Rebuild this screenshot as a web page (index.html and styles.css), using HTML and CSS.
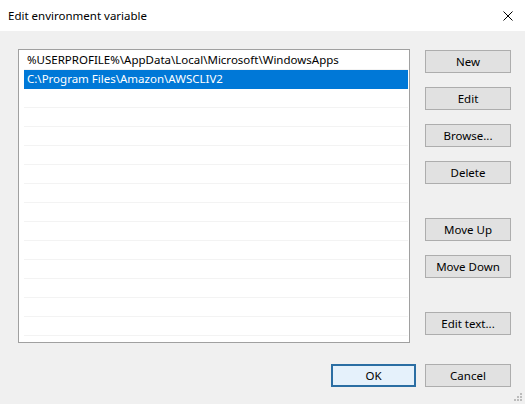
FILE: index.html
```html
<!DOCTYPE html>
<html lang="en">
<head>
    <meta charset="UTF-8">
    <title>Edit environment variable</title>
    <link rel="stylesheet" href="styles.css">
</head>
<body>
    <div class="dialog">
        <div class="titlebar">
            <div class="title">Edit environment variable</div>
            <div class="close">
                <svg width="10" height="10" viewBox="0 0 10 10">
                    <path d="M0.5 0.5 L9.5 9.5 M9.5 0.5 L0.5 9.5" stroke="#000" stroke-width="1" fill="none"/>
                </svg>
            </div>
        </div>

        <div class="content">
            <div class="main">
                <div class="list">
                    <div class="row">%USERPROFILE%\AppData\Local\Microsoft\WindowsApps</div>
                    <div class="row selected">C:\Program Files\Amazon\AWSCLIV2</div>
                    <div class="row"></div>
                    <div class="row"></div>
                    <div class="row"></div>
                    <div class="row"></div>
                    <div class="row"></div>
                    <div class="row"></div>
                    <div class="row"></div>
                    <div class="row"></div>
                    <div class="row"></div>
                    <div class="row"></div>
                    <div class="row"></div>
                    <div class="row"></div>
                    <div class="row"></div>
                    <div class="row"></div>
                </div>

                <div class="side">
                    <button class="btn">New</button>
                    <button class="btn gap">Edit</button>
                    <button class="btn gap">Browse...</button>
                    <button class="btn gap">Delete</button>
                    <button class="btn gap-lg">Move Up</button>
                    <button class="btn gap">Move Down</button>
                    <button class="btn gap-lg">Edit text...</button>
                </div>
            </div>

            <div class="footer">
                <button class="btn default">OK</button>
                <button class="btn">Cancel</button>
            </div>
        </div>

        <div class="grip">
            <svg width="8" height="8" viewBox="0 0 8 8">
                <rect x="6" y="0" width="2" height="2" fill="#bcbcbc"/>
                <rect x="3" y="3" width="2" height="2" fill="#bcbcbc"/>
                <rect x="6" y="3" width="2" height="2" fill="#bcbcbc"/>
                <rect x="0" y="6" width="2" height="2" fill="#bcbcbc"/>
                <rect x="3" y="6" width="2" height="2" fill="#bcbcbc"/>
                <rect x="6" y="6" width="2" height="2" fill="#bcbcbc"/>
            </svg>
        </div>
    </div>
</body>
</html>
```

FILE: styles.css
```css
* {
    margin: 0;
    padding: 0;
    box-sizing: border-box;
    font-family: 'Noto Sans', 'Open Sans', sans-serif;
}

body {
    width: 525px;
    height: 404px;
    overflow: hidden;
    background-color: #f0f0f0;
    color: #000;
    font-size: 11.5px;
}

.dialog {
    position: relative;
    width: 525px;
    height: 404px;
}

.titlebar {
    height: 31px;
    background-color: #fff;
    display: flex;
    align-items: center;
    justify-content: space-between;
    padding: 0 12px 0 8px;
}

.title {
    font-size: 11.5px;
    margin-top: -1px;
}

.close {
    width: 10px;
    height: 10px;
    display: flex;
}

.content {
    padding: 18px 14px 0 18px;
}

.main {
    display: flex;
    align-items: flex-start;
}

.list {
    width: 392px;
    height: 294px;
    background-color: #fff;
    border: 1px solid #a0a0a0;
    padding: 1px 1px 0 5px;
    overflow: hidden;
}

.row {
    height: 19px;
    line-height: 18px;
    padding-left: 3px;
    border-bottom: 1px solid #f3f3f3;
    white-space: nowrap;
}

.row.selected {
    background-color: #0078d7;
    color: #fff;
    border-bottom-color: #0078d7;
}

.side {
    display: flex;
    flex-direction: column;
    margin-left: 15px;
    padding-top: 1px;
}

.btn {
    width: 86px;
    height: 23px;
    background-color: #e1e1e1;
    border: 1px solid #adadad;
    font-size: 11.5px;
    color: #000;
    padding: 0;
    line-height: 20px;
}

.gap {
    margin-top: 14px;
}

.gap-lg {
    margin-top: 34px;
}

.footer {
    display: flex;
    justify-content: flex-end;
    gap: 9px;
    margin-top: 21px;
}

.btn.default {
    width: 85px;
    border: 2px solid #2b6ea3;
    background-color: #e5f1fb;
}

.grip {
    position: absolute;
    right: 3px;
    bottom: 3px;
    width: 8px;
    height: 8px;
    display: flex;
}
```
